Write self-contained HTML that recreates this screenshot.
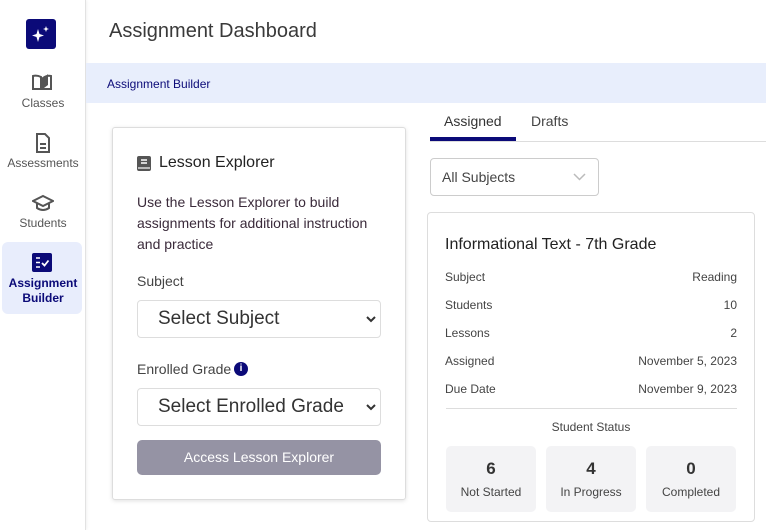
<!DOCTYPE html>
<html><head><meta charset="utf-8"><style>
*{box-sizing:border-box;margin:0;padding:0}
body{width:766px;height:530px;overflow:hidden;background:#fff;font-family:"Liberation Sans",sans-serif;color:#333;position:relative}
.abs{position:absolute}
.side{left:0;top:0;width:86px;height:530px;border-right:1px solid #e2e2e2;box-shadow:1px 0 3px rgba(0,0,0,.06)}
.nav{position:absolute;left:0;width:86px;text-align:center;font-size:12px;color:#555}
.t{font-size:13px;color:#444}
.row{position:absolute;left:445px;width:292px;font-size:12px;color:#444;display:flex;justify-content:space-between}
.box{position:absolute;top:446px;width:90px;height:66px;background:#f3f3f5;border-radius:5px;text-align:center}
.box b{display:block;font-size:17px;color:#333;margin-top:13px}
.box span{display:block;font-size:12px;color:#444;margin-top:6px}
.sel{position:absolute;left:137px;width:244px;height:38px;border:1px solid #ddd;border-radius:4px;font-size:19px;color:#333;padding-left:20px;line-height:36px}
</style></head><body>
<div class="abs side"></div>
<div class="abs" style="left:26px;top:19px;width:30px;height:30px;background:#0b0a78;border-radius:3px">
<svg width="30" height="30" viewBox="0 0 30 30"><path d="M12 10 L13.5 15 L18 16.5 L13.5 18 L12 23 L10.5 18 L6 16.5 L10.5 15Z" fill="#fff"/><path d="M20 7 L20.8 9.2 L23 10 L20.8 10.8 L20 13 L19.2 10.8 L17 10 L19.2 9.2Z" fill="#fff"/></svg></div>
<svg class="abs" style="left:31px;top:73px" width="22" height="18" viewBox="0 0 22 18"><path d="M2 3 L2 16 L10 16 L10 4 Q6 2 2 3Z M12 16 L20 16 L20 3 Q16 2 12 5Z" fill="none" stroke="#555" stroke-width="2"/><path d="M13 5 L17 1 L17 12 L13 15Z" fill="#555"/></svg>
<div class="nav" style="top:96px">Classes</div>
<svg class="abs" style="left:35px;top:133px" width="16" height="20" viewBox="0 0 16 20"><path d="M2 1 H10 L14 5 V19 H2Z" fill="none" stroke="#555" stroke-width="2"/><path d="M5 11H11M5 15H11" stroke="#555" stroke-width="2"/></svg>
<div class="nav" style="top:156px">Assessments</div>
<svg class="abs" style="left:32px;top:194px" width="22" height="18" viewBox="0 0 22 18"><path d="M11 2 L21 7 L11 12 L1 7Z" fill="none" stroke="#555" stroke-width="2"/><path d="M5 9 V14 Q11 18 17 14 V9" fill="none" stroke="#555" stroke-width="2"/></svg>
<div class="nav" style="top:216px">Students</div>
<div class="abs" style="left:2px;top:242px;width:80px;height:72px;background:#e8edfc;border-radius:6px"></div>
<svg class="abs" style="left:32px;top:253px" width="20" height="19" viewBox="0 0 20 19"><rect width="20" height="19" rx="2" fill="#0b0a78"/><path d="M4 5H8M4 9.5H8M4 14H8" stroke="#fff" stroke-width="1.6"/><path d="M10 10 L12.5 12.5 L16.5 7.5" fill="none" stroke="#fff" stroke-width="1.8"/></svg>
<div class="nav" style="top:276px;font-weight:bold;color:#0b0a78;line-height:15px">Assignment<br>Builder</div>

<div class="abs" style="left:109px;top:20px;font-size:20px;color:#3a3a3a">Assignment Dashboard</div>
<div class="abs" style="left:86px;top:63px;width:680px;height:40px;background:#e8eefc"></div>
<div class="abs" style="left:107px;top:77px;font-size:12px;color:#0b0a78">Assignment Builder</div>

<div class="abs" style="left:112px;top:127px;width:294px;height:373px;border:1px solid #ddd;border-radius:3px;box-shadow:0 1px 4px rgba(0,0,0,.12)"></div>
<svg class="abs" style="left:137px;top:156px" width="14" height="15" viewBox="0 0 14 15"><rect x="0" y="0" width="14" height="15" rx="2" fill="#555"/><path d="M4 4H10M4 7H10" stroke="#fff" stroke-width="1.4"/><path d="M1 12H13" stroke="#fff" stroke-width="1.2"/></svg>
<div class="abs" style="left:159px;top:154px;font-size:16px;color:#222">Lesson Explorer</div>
<div class="abs" style="left:137px;top:192px;font-size:14px;line-height:21px;color:#3a2a3a;width:250px">Use the Lesson Explorer to build assignments for additional instruction and practice</div>
<div class="abs" style="left:137px;top:273px;font-size:14px;color:#444">Subject</div>
<div class="sel" style="top:300px">Select Subject</div>
<svg class="abs" style="left:366px;top:316px" width="10" height="7" viewBox="0 0 10 7"><path d="M1 1 L5 5 L9 1" fill="none" stroke="#333" stroke-width="2"/></svg>
<div class="abs" style="left:137px;top:361px;font-size:14px;color:#444">Enrolled Grade</div>
<div class="abs" style="left:234px;top:362px;width:14px;height:14px;border-radius:50%;background:#0b0a78;color:#fff;font-size:10px;font-weight:bold;text-align:center;line-height:14px">i</div>
<div class="sel" style="top:388px">Select Enrolled Grade</div>
<svg class="abs" style="left:366px;top:404px" width="10" height="7" viewBox="0 0 10 7"><path d="M1 1 L5 5 L9 1" fill="none" stroke="#333" stroke-width="2"/></svg>
<div class="abs" style="left:137px;top:440px;width:244px;height:35px;background:#9593a4;border-radius:5px;color:#fff;font-size:14px;text-align:center;line-height:35px">Access Lesson Explorer</div>

<div class="abs" style="left:444px;top:113px;font-size:14px;color:#333">Assigned</div>
<div class="abs" style="left:531px;top:113px;font-size:14px;color:#444">Drafts</div>
<div class="abs" style="left:430px;top:141px;width:336px;height:1px;background:#ddd"></div>
<div class="abs" style="left:430px;top:137px;width:86px;height:4px;background:#0b0a78"></div>
<div class="abs" style="left:430px;top:158px;width:169px;height:38px;border:1px solid #ccc;border-radius:4px;font-size:14px;color:#444;padding-left:11px;line-height:36px">All Subjects</div>
<svg class="abs" style="left:573px;top:173px" width="13" height="8" viewBox="0 0 13 8"><path d="M1 1 L6.5 6.5 L12 1" fill="none" stroke="#bbb" stroke-width="1.5"/></svg>

<div class="abs" style="left:427px;top:212px;width:328px;height:310px;border:1px solid #ddd;border-radius:4px"></div>
<div class="abs" style="left:445px;top:236px;font-size:16px;color:#222">Informational Text - 7th Grade</div>
<div class="row" style="top:270px"><span>Subject</span><span>Reading</span></div>
<div class="row" style="top:298px"><span>Students</span><span>10</span></div>
<div class="row" style="top:326px"><span>Lessons</span><span>2</span></div>
<div class="row" style="top:354px"><span>Assigned</span><span>November 5, 2023</span></div>
<div class="row" style="top:382px"><span>Due Date</span><span>November 9, 2023</span></div>
<div class="abs" style="left:446px;top:408px;width:291px;height:1px;background:#ddd"></div>
<div class="abs" style="left:445px;top:420px;width:292px;text-align:center;font-size:12px;color:#444">Student Status</div>
<div class="box" style="left:446px"><b>6</b><span>Not Started</span></div>
<div class="box" style="left:546px"><b>4</b><span>In Progress</span></div>
<div class="box" style="left:646px"><b>0</b><span>Completed</span></div>
</body></html>
